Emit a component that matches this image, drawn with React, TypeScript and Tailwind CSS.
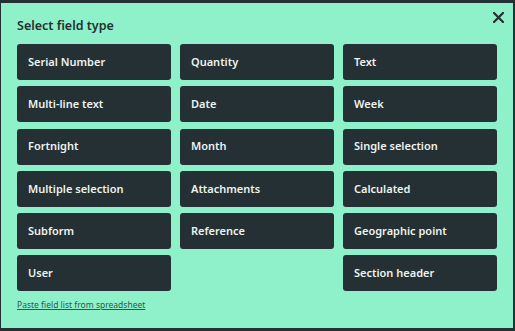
import React from "react";

const items = [
  "Serial Number", "Quantity", "Text",
  "Multi-line text", "Date", "Week",
  "Fortnight", "Month", "Single selection",
  "Multiple selection", "Attachments", "Calculated",
  "Subform", "Reference", "Geographic point",
  "User", "", "Section header",
];

export default function App() {
  return (
    <div className="w-[515px] h-[331px] bg-[#243033] pt-[3px] pl-[1px] pr-[2px] pb-[3px]" style={{ fontFamily: '"Noto Sans", "Open Sans", sans-serif' }}>
      <div className="relative w-full h-full bg-[#8ef1c9] px-4 pt-[13px]">
        <button className="absolute right-[9px] top-[8px] w-[12px] h-[12px] flex items-center justify-center">
          <svg width="11" height="11" viewBox="0 0 11 11">
            <path d="M1 1 L10 10 M10 1 L1 10" stroke="#243033" strokeWidth="2.2" strokeLinecap="square" />
          </svg>
        </button>
        <div className="text-[12.5px] font-semibold text-[#243033] leading-[20px]">Select field type</div>
        <div className="mt-[8px] grid grid-cols-3 gap-x-[9px] gap-y-[6.25px] w-[480px]">
          {items.map((t, i) =>
            t ? (
              <div key={i} className="h-[36px] rounded-[3px] bg-[#243033] text-[#eef3f0] text-[11px] font-semibold flex items-center pl-[11px]">
                {t}
              </div>
            ) : (
              <div key={i} />
            )
          )}
        </div>
        <div className="mt-[8px] text-[8.5px] text-[#2d5a4e] underline leading-[12px]">Paste field list from spreadsheet</div>
      </div>
    </div>
  );
}
